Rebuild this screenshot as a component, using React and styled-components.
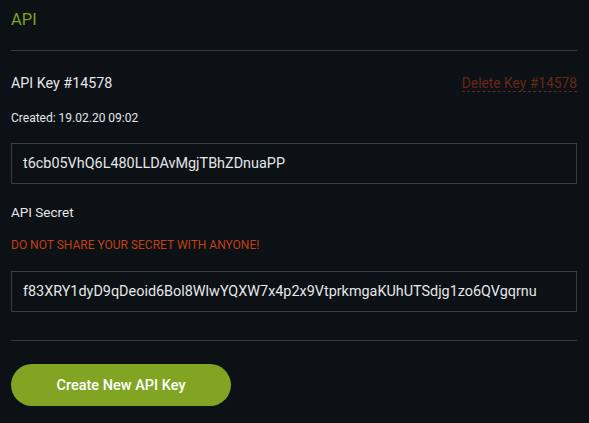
import React from "react";
import styled, { createGlobalStyle } from "styled-components";

const GlobalStyle = createGlobalStyle`
    body {
        margin: 0;
        background-color: #0b1115;
        font-family: Roboto, "Liberation Sans", sans-serif;
        color: #e6e6e6;
    }
`;

const Page = styled.div`
    padding: 0 12px 18px 11px;
    min-height: 423px;
    box-sizing: border-box;
`;

const Header = styled.h1`
    margin: 0;
    height: 50px;
    box-sizing: border-box;
    padding-top: 9px;
    font-size: 16.5px;
    line-height: 22px;
    font-weight: normal;
    color: #7fa321;
`;

const Divider = styled.hr`
    margin: ${props => props.$top || 0}px 0 0;
    border: none;
    border-top: 1px solid #3b3b3b;
`;

const KeyRow = styled.div`
    display: flex;
    align-items: center;
    justify-content: space-between;
    margin-top: 22px;
    height: 20px;
`;

const KeyTitle = styled.div`
    font-size: 14.3px;
    line-height: 20px;
`;

const DeleteLink = styled.a`
    font-size: 13.8px;
    line-height: 16px;
    color: #6a2716;
    border-bottom: 1px dashed #6a2716;
    text-decoration: none;
    cursor: pointer;
`;

const Meta = styled.div`
    margin-top: ${props => props.$top}px;
    font-size: ${props => props.$size || 12}px;
    line-height: 20px;
    color: ${props => props.$warn ? "#c23f16" : "#e6e6e6"};
`;

const KeyBox = styled.div`
    margin-top: ${props => props.$top}px;
    height: 41px;
    box-sizing: border-box;
    border: 1px solid #3d3d3d;
    padding: 0 11px;
    display: flex;
    align-items: center;
    font-size: 14.4px;
    color: #e6e6e6;
`;

const CreateButton = styled.button`
    margin-top: 23px;
    width: 220px;
    height: 42px;
    border: none;
    border-radius: 21px;
    background-color: #81a423;
    color: #fff;
    font-family: Roboto, "Liberation Sans", sans-serif;
    font-size: 14.5px;
    font-weight: 500;
    cursor: pointer;
`;

export default function App() {
    return (
        <Page>
            <GlobalStyle/>
            <Header>API</Header>
            <Divider/>
            <KeyRow>
                <KeyTitle>API Key #14578</KeyTitle>
                <DeleteLink>Delete Key #14578</DeleteLink>
            </KeyRow>
            <Meta $top={15}>Created: 19.02.20 09:02</Meta>
            <KeyBox $top={15}>t6cb05VhQ6L480LLDAvMgjTBhZDnuaPP</KeyBox>
            <Meta $top={18} $size={13.5}>API Secret</Meta>
            <Meta $top={13} $warn>DO NOT SHARE YOUR SECRET WITH ANYONE!</Meta>
            <KeyBox $top={16}>f83XRY1dyD9qDeoid6Bol8WlwYQXW7x4p2x9VtprkmgaKUhUTSdjg1zo6QVgqrnu</KeyBox>
            <Divider $top={28}/>
            <CreateButton>Create New API Key</CreateButton>
        </Page>
    );
}
